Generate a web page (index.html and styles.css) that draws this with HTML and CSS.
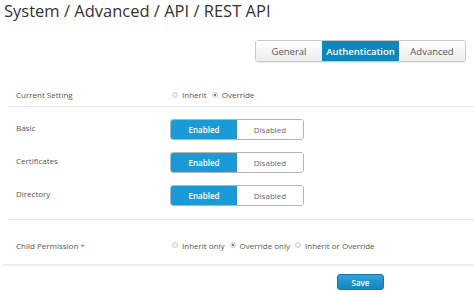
FILE: index.html
```html
<!DOCTYPE html>
<html>
<head>
<meta charset="utf-8">
<link rel="stylesheet" href="styles.css">
</head>
<body>
<h1 class="title">System / Advanced / API / REST API</h1>
<div class="tabs-bar">
  <div class="tabs">
    <span class="tab">General</span>
    <span class="tab active">Authentication</span>
    <span class="tab">Advanced</span>
  </div>
</div>
<div class="form">
  <div class="row row-setting">
    <div class="label">Current Setting</div>
    <div class="control radios">
      <span class="radio"><i class="dot"></i>Inherit</span>
      <span class="radio"><i class="dot on"></i>Override</span>
    </div>
  </div>
  <div class="group">
    <div class="row row-toggle">
      <div class="label">Basic</div>
      <div class="control"><div class="toggle"><span class="opt sel">Enabled</span><span class="opt">Disabled</span></div></div>
    </div>
    <div class="row row-toggle">
      <div class="label">Certificates</div>
      <div class="control"><div class="toggle"><span class="opt sel">Enabled</span><span class="opt">Disabled</span></div></div>
    </div>
    <div class="row row-toggle">
      <div class="label">Directory</div>
      <div class="control"><div class="toggle"><span class="opt sel">Enabled</span><span class="opt">Disabled</span></div></div>
    </div>
  </div>
  <div class="row row-child">
    <div class="label">Child Permission <span class="req">*</span></div>
    <div class="control radios">
      <span class="radio"><i class="dot"></i>Inherit only</span>
      <span class="radio"><i class="dot on"></i>Override only</span>
      <span class="radio"><i class="dot"></i>Inherit or Override</span>
    </div>
  </div>
</div>
<div class="footer">
  <button class="save">Save</button>
</div>
</body>
</html>
```
FILE: styles.css
```css
* { box-sizing: border-box; }
html, body { margin: 0; padding: 0; background: #fff; }
body {
  font-family: "Open Sans", "DejaVu Sans", sans-serif;
  color: #444;
  width: 474px;
  height: 293px;
  overflow: hidden;
}
.title {
  margin: 0;
  padding: 0 0 0 4px;
  font-weight: 400;
  font-size: 16.5px;
  line-height: 21px;
  color: #333;
  height: 20px;
}
.tabs-bar {
  display: flex;
  justify-content: flex-end;
  padding: 20px 8px 0 0;
}
.tabs {
  display: flex;
  height: 22px;
  border: 1px solid #c8c8c8;
  border-radius: 3px;
  box-shadow: 0 1px 1px rgba(0,0,0,0.08);
  overflow: hidden;
}
.tab {
  display: flex;
  align-items: center;
  justify-content: center;
  font-size: 9.5px;
  color: #555;
  background: linear-gradient(#ffffff, #ececec);
  width: 66px;
}
.tab + .tab { border-left: 1px solid #d4d4d4; }
.tab.active {
  width: 77px;
  background: #0f86bd;
  color: #fff;
  font-weight: 600;
  border-left: none;
}
.tab.active + .tab { border-left: none; }
.form { padding-left: 8px; }
.row {
  display: flex;
  align-items: center;
}
.label {
  width: 162px;
  padding-left: 8px;
  font-size: 8px;
  color: #555;
}
.control { display: flex; align-items: center; }
.row-setting {
  height: 45px;
  padding-top: 21px;
  border-bottom: 1px solid #e6e6e6;
}
.radios { font-size: 8px; color: #555; gap: 5px; padding-left: 2px; }
.radio { display: flex; align-items: center; gap: 4px; }
.dot {
  display: inline-block;
  width: 6px;
  height: 6px;
  border-radius: 50%;
  border: 1px solid #cfcfcf;
  background: #f2f2f2;
  position: relative;
}
.dot.on::after {
  content: "";
  position: absolute;
  left: 1px; top: 1px;
  width: 2px; height: 2px;
  border-radius: 50%;
  background: #555;
}
.group {
  padding-top: 12px;
  padding-bottom: 13px;
  border-bottom: 1px solid #e6e6e6;
  display: flex;
  flex-direction: column;
  gap: 12px;
}
.row-toggle { align-items: flex-start; }
.row-toggle .label { padding-top: 3px; }
.toggle {
  display: flex;
  height: 21px;
  width: 134px;
  border: 1px solid #b5b5b5;
  border-radius: 3px;
  overflow: hidden;
}
.opt {
  flex: 1;
  display: flex;
  align-items: center;
  justify-content: center;
  font-size: 8px;
  color: #666;
  background: #fff;
}
.opt.sel {
  background: #1a9ad6;
  color: #fff;
  font-weight: 600;
}
.row-child {
  height: 46px;
  padding-top: 6px;
  border-bottom: 2px solid #ececec;
  margin-left: -5px;
  padding-left: 5px;
}
.req { color: #d9534f; }
.footer {
  display: flex;
  padding: 8px 0 0 337px;
}
.save {
  width: 47px;
  height: 16px;
  padding: 0;
  border: 1px solid #1676a8;
  border-radius: 3px;
  background: linear-gradient(#2ea2d8, #1884bd);
  color: #fff;
  font-family: inherit;
  font-size: 8px;
  font-weight: 600;
}
```
